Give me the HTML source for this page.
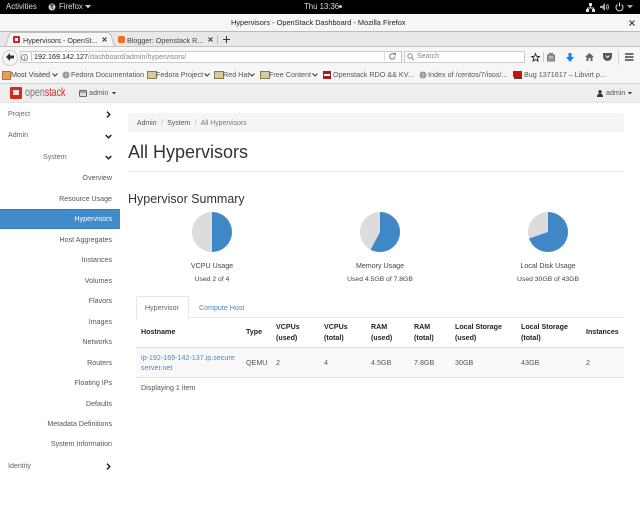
<!DOCTYPE html>
<html><head><meta charset="utf-8"><title>Hypervisors</title>
<style>
html,body{margin:0;padding:0;background:#fff}
#p{position:relative;width:640px;height:512px;overflow:hidden;background:#fff;font-family:"Liberation Sans",sans-serif;color:#333;filter:blur(.3px)}
#p div{position:absolute;white-space:nowrap}
.nav{right:528px;font-size:7.1px;line-height:12px;color:#555;position:absolute;text-align:right}
.bm{top:69px;font-size:7.2px;line-height:12px;color:#555}
.th{font-size:7.1px;line-height:10.6px;font-weight:bold;color:#222}
.td{font-size:7.15px;line-height:10px;color:#555}
.c{text-align:center;transform:translateX(-50%)}
svg{position:absolute;overflow:visible}
</style></head><body><div id="p">
<!-- top bar -->
<div style="left:0;top:0;width:640px;height:14px;background:#000"></div>
<div style="left:6px;top:1px;font-size:7.8px;line-height:12px;color:#ddd">Activities</div>
<svg style="left:48px;top:3px" width="8" height="8" viewBox="0 0 8 8"><circle cx="4" cy="4" r="3.5" fill="#ccc"/><path d="M2 2h3L3.5 4l1.5 2" stroke="#222" fill="none"/></svg>
<div style="left:59px;top:1px;font-size:7.8px;line-height:12px;color:#ddd">Firefox</div>
<svg style="left:85px;top:5px" width="6" height="4"><path d="M0 0h6L3 3.5z" fill="#ccc"/></svg>
<div style="left:304px;top:1px;font-size:7.8px;line-height:12px;color:#ddd">Thu 13:36</div>
<div style="left:339px;top:5px;width:3px;height:3px;border-radius:50%;background:#ccc"></div>
<svg style="left:586px;top:3px" width="9" height="9" viewBox="0 0 9 9"><path d="M3 0h3v3H3zM0 6h3v3H0zM6 6h3v3H6z" fill="#ddd"/><path d="M4.500 3v2M1.500 6V5h6v1" stroke="#ddd" fill="none"/></svg>
<svg style="left:600px;top:3px" width="9" height="8" viewBox="0 0 9 8"><path d="M0 3h2l3-3v8L2 5H0z" fill="#aaa"/><path d="M6 2q1.500 2 0 4M7.500 1q2 3 0 6" stroke="#aaa" fill="none"/></svg>
<svg style="left:615px;top:2px" width="9" height="10" viewBox="0 0 9 10"><path d="M2.500 2.500a3.500 3.500 0 1 0 4 0M4.500 0.500v4" stroke="#ddd" fill="none" stroke-width="1"/></svg>
<svg style="left:627px;top:5px" width="6" height="4"><path d="M0 0h6L3 3.500z" fill="#aaa"/></svg>
<!-- title bar -->
<div style="left:0;top:14px;width:640px;height:17px;background:#f6f6f6;border-radius:3px 3px 0 0;border-bottom:1px solid #bbb"></div>
<div style="left:231px;top:16px;font-size:7.4px;line-height:13px;color:#222">Hypervisors - OpenStack Dashboard - Mozilla Firefox</div>
<svg style="left:629px;top:20px" width="6" height="6"><path d="M.5.5l5 5M5.500.5l-5 5" stroke="#333" stroke-width="1.100"/></svg>
<!-- tab strip -->
<div style="left:0;top:32px;width:640px;height:14px;background:#e8e8e8;border-bottom:1px solid #c4c4c4"></div>
<svg style="left:4px;top:32px" width="112" height="15"><path d="M0 14.500C4 14 3 1 8 .5H104C109 1 108 14 112 14.500z" fill="#f6f6f6" stroke="#c0c0c0"/></svg>
<div style="left:13px;top:36px;width:7px;height:7px;background:#c4262e;border-radius:1px"></div>
<div style="left:15px;top:38px;width:3px;height:3px;background:#fff"></div>
<div style="left:23px;top:34px;font-size:7.2px;line-height:13px;color:#333">Hypervisors - OpenSt...</div>
<svg style="left:102px;top:37px" width="5" height="5"><path d="M.5.5l4 4M4.500.5l-4 4" stroke="#333"/></svg>
<div style="left:118px;top:36px;width:7px;height:7px;background:#f26c23;border-radius:2px"></div>
<div style="left:127px;top:34px;font-size:7.2px;line-height:13px;color:#444">Blogger: Openstack R...</div>
<svg style="left:208px;top:37px" width="5" height="5"><path d="M.5.5l4 4M4.500.5l-4 4" stroke="#333"/></svg>
<div style="left:217px;top:35px;width:1px;height:9px;background:#bbb"></div>
<svg style="left:223px;top:36px" width="7" height="7"><path d="M3.500 0v7M0 3.500h7" stroke="#333" stroke-width="1"/></svg>
<!-- nav bar -->
<div style="left:0;top:47px;width:640px;height:20px;background:#f6f6f6;border-bottom:1px solid #d0d0d0"></div>
<div style="left:20px;top:51px;width:380px;height:10px;background:#fff;border:1px solid #ccc"></div>
<div style="left:2px;top:50px;width:14px;height:14px;border-radius:50%;background:#f8f8f8;border:1px solid #ccc"></div>
<svg style="left:6px;top:53px" width="8" height="8"><path d="M0 4l4-4v2.500h4v3H4V8z" fill="#333"/></svg>
<svg style="left:21px;top:54px" width="7" height="7"><circle cx="3.500" cy="3.500" r="3" fill="none" stroke="#888"/><path d="M3.500 2v.6M3.500 3.200V5.500" stroke="#888"/></svg>
<div style="left:31px;top:51px;width:1px;height:10px;background:#ccc"></div>
<div style="left:34px;top:50px;font-size:7.2px;line-height:13px;color:#222">192.169.142.127<span style="color:#888">/dashboard/admin/hypervisors/</span></div>
<div style="left:384px;top:52px;width:1px;height:9px;background:#ddd"></div>
<svg style="left:389px;top:53px" width="7" height="7"><path d="M6 3.500a2.700 2.700 0 1 1-1-2.200" fill="none" stroke="#6a7f95"/><path d="M4 0h3v3z" fill="#6a7f95"/></svg>
<div style="left:404px;top:51px;width:119px;height:10px;background:#fff;border:1px solid #ccc"></div>
<svg style="left:407px;top:53px" width="7" height="7"><circle cx="3" cy="3" r="2.200" fill="none" stroke="#888"/><path d="M4.500 4.500L7 7" stroke="#888"/></svg>
<div style="left:417px;top:50px;font-size:7px;line-height:13px;color:#888">Search</div>
<svg style="left:531px;top:53px" width="9" height="9" viewBox="0 0 9 9"><path d="M4.500.7l1.100 2.600 2.800.2-2.100 1.800.7 2.800-2.500-1.500-2.500 1.500.7-2.800L.6 3.500l2.800-.2z" fill="none" stroke="#222" stroke-width=".9"/></svg>
<div style="left:543px;top:52px;width:1px;height:10px;background:#ccc"></div>
<svg style="left:547px;top:53px" width="8" height="9"><path d="M2.500 1.500V.5h3v1M.5 2h7v6h-7z" fill="#999" stroke="#777"/><path d="M2 4h4" stroke="#ddd"/></svg>
<svg style="left:566px;top:53px" width="8" height="9"><path d="M2.500 0h3v4H8L4 9 0 4h2.500z" fill="#0a84ff"/></svg>
<svg style="left:585px;top:53px" width="9" height="8"><path d="M4.500 0L9 4H7.500v4h-2V5h-2v3h-2V4H0z" fill="#666"/></svg>
<svg style="left:603px;top:53px" width="9" height="8"><path d="M0 0h9v3.500a4.500 4.500 0 0 1-9 0z" fill="#555"/><path d="M2.500 2.500L4.500 4.500 6.500 2.500" stroke="#eee" fill="none"/></svg>
<div style="left:618px;top:50px;width:1px;height:15px;background:#d4d4d4"></div>
<svg style="left:625px;top:53px" width="9" height="8"><path d="M0 1h8.500M0 4h8.500M0 7h8.500" stroke="#222" stroke-width="1.200"/></svg>
<!-- bookmarks -->
<div style="left:0;top:67px;width:640px;height:16px;background:#f6f6f6;border-bottom:1px solid #d4d4d4"></div>
<div style="left:2px;top:71px;width:7px;height:7px;background:#e0a060;border:.5px solid #c07030"></div>
<div class="bm" style="left:11px;color:#444">Most Visited</div>
<svg style="left:52px;top:73px" width="6" height="4"><path d="M.5.500L3 3 5.500.5" stroke="#333" fill="none"/></svg>
<svg style="left:62px;top:71px" width="8" height="8"><circle cx="4" cy="4" r="3.500" fill="#888"/><path d="M1 3h6M1 5h6M4 .5v7" stroke="#ddd" stroke-width=".6"/></svg>
<div class="bm" style="left:71px">Fedora Documentation</div>
<div style="left:147px;top:71px;width:8px;height:6px;background:#d8c9a0;border:.5px solid #8a7a50"></div>
<div class="bm" style="left:156px">Fedora Project</div>
<svg style="left:204px;top:73px" width="6" height="4"><path d="M.5.500L3 3 5.500.5" stroke="#333" fill="none"/></svg>
<div style="left:214px;top:71px;width:8px;height:6px;background:#d8c9a0;border:.5px solid #8a7a50"></div>
<div class="bm" style="left:223px">Red Hat</div>
<svg style="left:249px;top:73px" width="6" height="4"><path d="M.5.500L3 3 5.500.5" stroke="#333" fill="none"/></svg>
<div style="left:260px;top:71px;width:8px;height:6px;background:#d8c9a0;border:.5px solid #8a7a50"></div>
<div class="bm" style="left:269px">Free Content</div>
<svg style="left:312px;top:73px" width="6" height="4"><path d="M.5.500L3 3 5.500.5" stroke="#333" fill="none"/></svg>
<div style="left:323px;top:71px;width:8px;height:8px;background:#a02020"></div>
<div style="left:324px;top:74px;width:6px;height:1.500px;background:#fff"></div>
<div class="bm" style="left:333px">Openstack RDO &amp;&amp; KV...</div>
<svg style="left:419px;top:71px" width="8" height="8"><circle cx="4" cy="4" r="3.500" fill="#888"/><path d="M1 3h6M1 5h6M4 .5v7" stroke="#ddd" stroke-width=".6"/></svg>
<div class="bm" style="left:428px">Index of /centos/7/isos/...</div>
<div style="left:513px;top:71px;width:9px;height:6px;background:#cc1010"></div>
<div style="left:514px;top:77px;width:8px;height:2px;background:#444"></div>
<div class="bm" style="left:524px">Bug 1371617 – Libvirt p...</div>
<!-- openstack header -->
<div style="left:0;top:84px;width:640px;height:18px;background:#eee;border-bottom:1px solid #e2e2e2"></div>
<div style="left:10px;top:87px;width:12px;height:12px;background:#d42a20;border-radius:1px"></div>
<div style="left:13px;top:90px;width:6px;height:5px;background:#f3e2df"></div>
<div style="left:25px;top:85px;font-size:12px;line-height:15px;color:#777;transform:scaleX(.74);transform-origin:0 0">open<span style="color:#d42a20">stack</span></div>
<svg style="left:79px;top:90px" width="8" height="7"><rect x=".5" y=".5" width="7" height="6" rx="1" fill="#ddd" stroke="#666"/><path d="M1 2h6" stroke="#666"/></svg>
<div style="left:89px;top:87px;font-size:7.1px;line-height:12px;color:#555">admin</div>
<svg style="left:112px;top:92px" width="4" height="3"><path d="M0 0h4L2 2.500z" fill="#333"/></svg>
<svg style="left:597px;top:90px" width="6" height="7"><circle cx="3" cy="1.800" r="1.700" fill="#333"/><path d="M0 7q0-3.500 3-3.500T6 7z" fill="#333"/></svg>
<div style="left:606px;top:87px;font-size:7.1px;line-height:12px;color:#555">admin</div>
<svg style="left:628px;top:92px" width="4" height="3"><path d="M0 0h4L2 2.500z" fill="#333"/></svg>
<!-- sidebar -->
<div style="left:8px;top:108px;font-size:7.1px;line-height:12px;color:#666">Project</div>
<svg style="left:106px;top:111px" width="5" height="7"><path d="M1 .7L3.800 3.500 1 6.300" stroke="#222" stroke-width="1.500" fill="none"/></svg>
<div style="left:8px;top:129px;font-size:7.1px;line-height:12px;color:#666">Admin</div>
<svg style="left:105px;top:134px" width="7" height="5"><path d="M.7 1L3.500 3.800 6.300 1" stroke="#222" stroke-width="1.500" fill="none"/></svg>
<div style="left:43px;top:151px;font-size:7.1px;line-height:12px;color:#666">System</div>
<svg style="left:105px;top:155px" width="7" height="5"><path d="M.7 1L3.500 3.800 6.300 1" stroke="#222" stroke-width="1.500" fill="none"/></svg>
<div class="nav" style="top:172px">Overview</div>
<div class="nav" style="top:193px">Resource Usage</div>
<div style="left:0;top:209px;width:120px;height:20px;background:#428bca;border-bottom:1px solid #357ebd;border-top:1px solid #357ebd;box-sizing:border-box"></div>
<div class="nav" style="top:213px;color:#fff">Hypervisors</div>
<div class="nav" style="top:234px">Host Aggregates</div>
<div class="nav" style="top:254px">Instances</div>
<div class="nav" style="top:275px">Volumes</div>
<div class="nav" style="top:295px">Flavors</div>
<div class="nav" style="top:316px">Images</div>
<div class="nav" style="top:336px">Networks</div>
<div class="nav" style="top:357px">Routers</div>
<div class="nav" style="top:377px">Floating IPs</div>
<div class="nav" style="top:398px">Defaults</div>
<div class="nav" style="top:418px">Metadata Definitions</div>
<div class="nav" style="top:438px">System Information</div>
<div style="left:8px;top:460px;font-size:7.1px;line-height:12px;color:#666">Identity</div>
<svg style="left:106px;top:463px" width="5" height="7"><path d="M1 .7L3.800 3.500 1 6.300" stroke="#222" stroke-width="1.500" fill="none"/></svg>
<!-- breadcrumb -->
<div style="left:128px;top:113px;width:496px;height:19px;background:#f5f5f5;border-radius:2px"></div>
<div style="left:137px;top:117.500px;font-size:6.9px;line-height:11px;color:#555">Admin <span style="color:#aaa;margin:0 2.500px">/</span> System <span style="color:#aaa;margin:0 2.500px">/</span> <span style="color:#777">All Hypervisors</span></div>
<div style="left:128px;top:139px;font-size:18px;line-height:26px;color:#333">All Hypervisors</div>
<div style="left:128px;top:171px;width:496px;height:1px;background:#eee"></div>
<div style="left:128px;top:191px;font-size:12.500px;line-height:16px;color:#333">Hypervisor Summary</div>
<!-- pies -->
<svg style="left:192px;top:212px" width="40" height="40" viewBox="0 0 40 40"><circle cx="20" cy="20" r="20" fill="#dcdcdc"/><path d="M20 20V0A20 20 0 0 1 20 40z" fill="#3f87c6"/></svg>
<svg style="left:360px;top:212px" width="40" height="40" viewBox="0 0 40 40"><circle cx="20" cy="20" r="20" fill="#dcdcdc"/><path d="M20 20V0A20 20 0 1 1 10.700 37.700z" fill="#3f87c6"/></svg>
<svg style="left:528px;top:212px" width="40" height="40" viewBox="0 0 40 40"><circle cx="20" cy="20" r="20" fill="#dcdcdc"/><path d="M20 20V0A20 20 0 1 1 1.100 26.500z" fill="#3f87c6"/></svg>
<div class="c" style="left:212px;top:260px;font-size:7.1px;line-height:12px;color:#444">VCPU Usage</div>
<div class="c" style="left:212px;top:274px;font-size:6.8px;line-height:12px;color:#444">Used 2 of 4</div>
<div class="c" style="left:380px;top:260px;font-size:7.1px;line-height:12px;color:#444">Memory Usage</div>
<div class="c" style="left:380px;top:274px;font-size:6.8px;line-height:12px;color:#444">Used 4.5GB of 7.8GB</div>
<div class="c" style="left:548px;top:260px;font-size:7.1px;line-height:12px;color:#444">Local Disk Usage</div>
<div class="c" style="left:548px;top:274px;font-size:6.8px;line-height:12px;color:#444">Used 30GB of 43GB</div>
<!-- tabs -->
<div style="left:136px;top:317px;width:488px;height:1px;background:#e6e6e6"></div>
<div style="left:136px;top:296px;width:51px;height:22px;background:#fff;border:1px solid #e6e6e6;border-bottom:none;border-radius:2px 2px 0 0"></div>
<div style="left:145px;top:301.500px;font-size:7.1px;line-height:12px;color:#666">Hypervisor</div>
<div style="left:199px;top:301.500px;font-size:7.1px;line-height:12px;color:#428bca">Compute Host</div>
<!-- table -->
<div style="left:136px;top:348px;width:488px;height:29px;background:#f9f9f9;border-bottom:1px solid #e6e6e6"></div>
<div style="left:136px;top:346.500px;width:488px;height:1.500px;background:#ddd"></div>
<div class="th" style="left:141px;top:327px">Hostname</div>
<div class="th" style="left:246px;top:327px">Type</div>
<div class="th" style="left:276px;top:322px">VCPUs<br>(used)</div>
<div class="th" style="left:324px;top:322px">VCPUs<br>(total)</div>
<div class="th" style="left:371px;top:322px">RAM<br>(used)</div>
<div class="th" style="left:414px;top:322px">RAM<br>(total)</div>
<div class="th" style="left:455px;top:322px">Local Storage<br>(used)</div>
<div class="th" style="left:521px;top:322px">Local Storage<br>(total)</div>
<div class="th" style="left:586px;top:327px">Instances</div>
<div class="td" style="left:141px;top:353px;color:#428bca;line-height:10.200px">ip-192-169-142-137.ip.secure<br>server.net</div>
<div class="td" style="left:246px;top:357.500px">QEMU</div>
<div class="td" style="left:276px;top:357.500px">2</div>
<div class="td" style="left:324px;top:357.500px">4</div>
<div class="td" style="left:371px;top:357.500px">4.5GB</div>
<div class="td" style="left:414px;top:357.500px">7.8GB</div>
<div class="td" style="left:455px;top:357.500px">30GB</div>
<div class="td" style="left:521px;top:357.500px">43GB</div>
<div class="td" style="left:586px;top:357.500px">2</div>
<div class="td" style="left:141px;top:382.500px">Displaying 1 item</div>
</div></body></html>
